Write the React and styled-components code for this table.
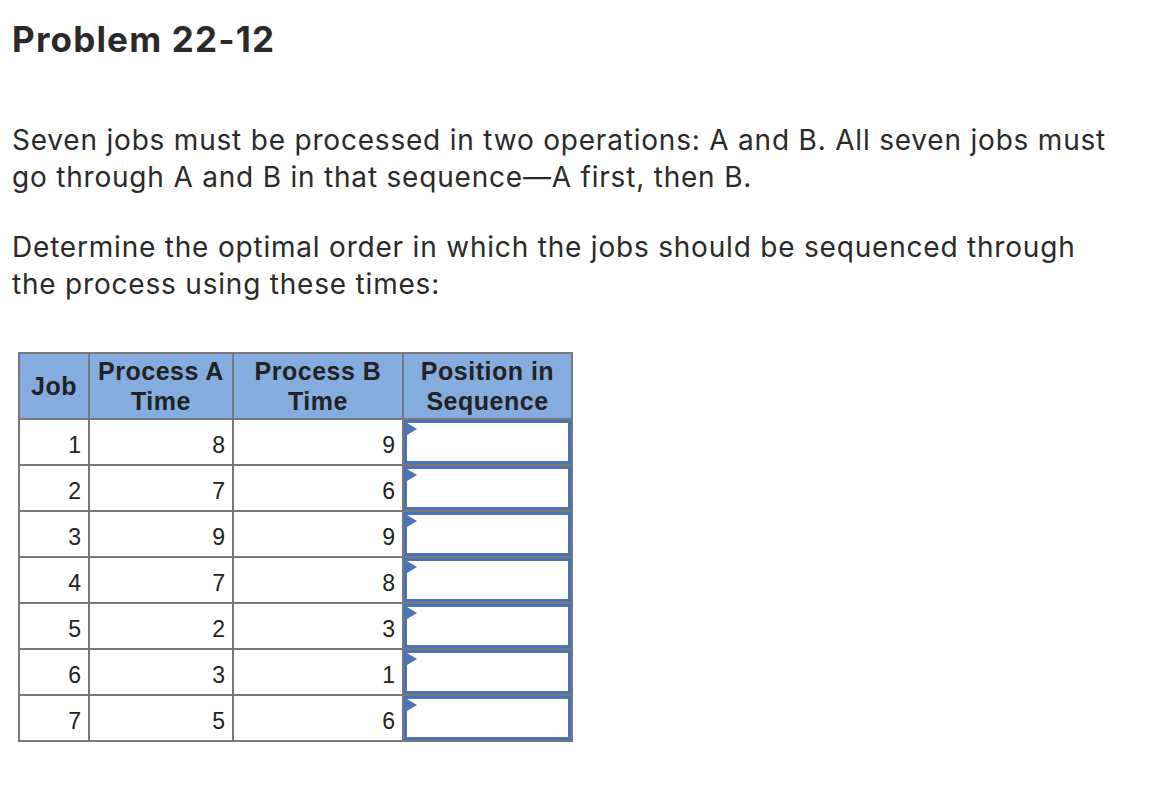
import React from "react";
import styled, { createGlobalStyle } from "styled-components";

const Global = createGlobalStyle`
  html, body { margin: 0; padding: 0; background: #fff; }
  body { font-family: Inter, "Open Sans", sans-serif; color: #2a2a2a; }
`;

const Page = styled.div`
  padding: 19px 12px 40px 12px;
`;

const Title = styled.h1`
  margin: 0 0 63px 0;
  font-size: 35px;
  font-weight: 700;
  line-height: 40px;
  letter-spacing: 1.2px;
  color: #2a2a2a;
`;

const Para = styled.p`
  margin: 0 0 ${(p) => p.$mb}px 0;
  font-size: 28px;
  line-height: 37px;
  letter-spacing: 0.8px;
  color: #2a2a2a;
`;

const Table = styled.table`
  margin: 0 0 0 6px;
  border-collapse: collapse;
  font-family: "Liberation Sans", Arial, sans-serif;
  color: #222;
  border: 2px solid #787878;
`;

const Th = styled.th`
  background: #84acdf;
  border: 2px solid #787878;
  font-size: 25px;
  font-weight: 700;
  line-height: 30px;
  letter-spacing: 0.5px;
  height: 66px;
  padding: 0 4px;
  width: ${(p) => p.$w}px;
  box-sizing: border-box;
  text-align: center;
  white-space: nowrap;
`;

const Td = styled.td`
  border: 2px solid #787878;
  font-size: 23px;
  height: 46px;
  padding: 6px 7px 0 0;
  text-align: right;
  vertical-align: middle;
  box-sizing: border-box;
`;

const InputTd = styled.td`
  border: 2px solid #787878;
  padding: 0;
  height: 46px;
  box-sizing: border-box;
`;

const InputBox = styled.div`
  position: relative;
  height: 44px;
  border: 3px solid #4a74b6;
  box-sizing: border-box;
  background: #fff;
`;

const Flag = styled.span`
  position: absolute;
  left: 0;
  top: 0;
  width: 0;
  height: 0;
  border-top: 6px solid transparent;
  border-bottom: 6px solid transparent;
  border-left: 10px solid #4a74b6;
`;

const rows = [
  [1, 8, 9],
  [2, 7, 6],
  [3, 9, 9],
  [4, 7, 8],
  [5, 2, 3],
  [6, 3, 1],
  [7, 5, 6],
];

export default function App() {
  return (
    <>
      <Global />
      <Page>
        <Title>Problem 22-12</Title>
        <Para $mb={33}>
          Seven jobs must be processed in two operations: A and B. All seven jobs must
          <br />
          go through A and B in that sequence—A first, then B.
        </Para>
        <Para $mb={49}>
          Determine the optimal order in which the jobs should be sequenced through
          <br />
          the process using these times:
        </Para>
        <Table>
          <thead>
            <tr>
              <Th $w={70}>Job</Th>
              <Th $w={144}>
                Process A
                <br />
                Time
              </Th>
              <Th $w={170}>
                Process B
                <br />
                Time
              </Th>
              <Th $w={169}>
                Position in
                <br />
                Sequence
              </Th>
            </tr>
          </thead>
          <tbody>
            {rows.map(([j, a, b]) => (
              <tr key={j}>
                <Td>{j}</Td>
                <Td>{a}</Td>
                <Td>{b}</Td>
                <InputTd>
                  <InputBox>
                    <Flag />
                  </InputBox>
                </InputTd>
              </tr>
            ))}
          </tbody>
        </Table>
      </Page>
    </>
  );
}
